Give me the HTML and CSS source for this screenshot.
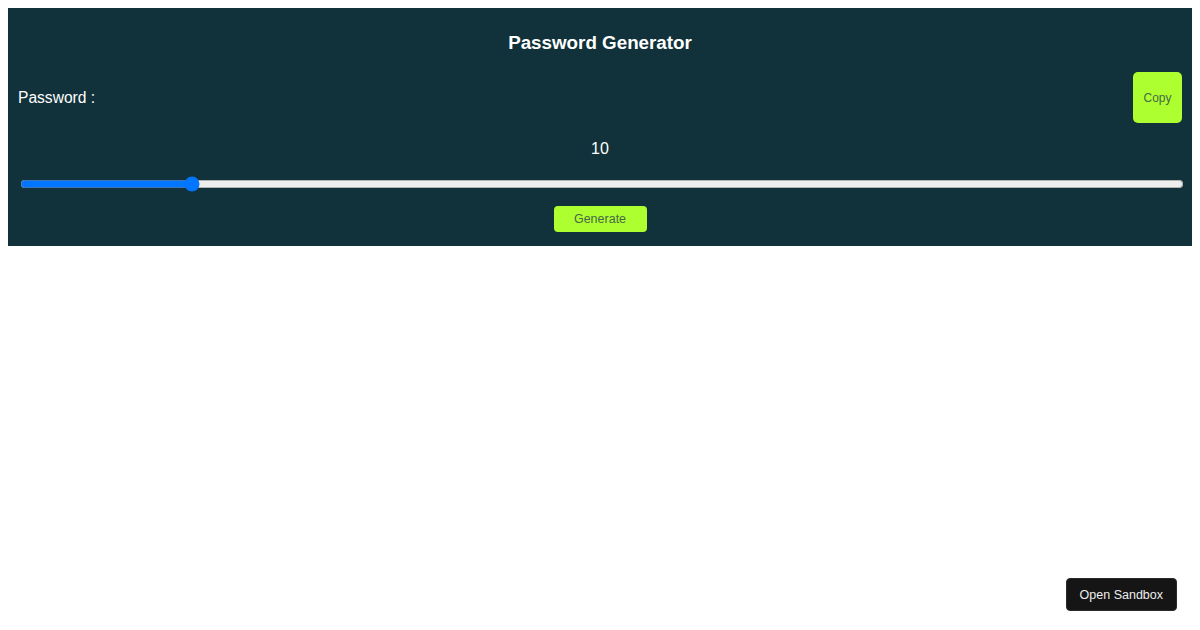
FILE: index.html
```html
<!DOCTYPE html>
<html lang="en">
<head>
  <meta charset="UTF-8">
  <meta name="viewport" content="width=device-width, initial-scale=1.0">
  <title>Password Generator</title>
  <link rel="stylesheet" href="styles.css">
</head>
<body>
  <div class="container">
    <h2 class="title">Password Generator</h2>

    <div class="password-row">
      <span class="password-label">Password : <span id="password"></span></span>
      <button class="copy-btn" onclick="copyPassword()">Copy</button>
    </div>

    <div class="length-value" id="lengthValue">10</div>
    <input type="range" id="length" class="length-range" min="0" max="70" value="10" oninput="updateLength()">

    <div class="generate-wrap">
      <button class="generate-btn" onclick="generatePassword()">Generate</button>
    </div>
  </div>

  <a class="sandbox-btn" href="#">Open Sandbox</a>

  <script>
    // Update the length label when slider moves
    function updateLength() {
      document.getElementById("lengthValue").textContent = document.getElementById("length").value;
    }

    // Build a random password
    function generatePassword() {
      const chars = "ABCDEFGHIJKLMNOPQRSTUVWXYZabcdefghijklmnopqrstuvwxyz0123456789!@#$%^&*";
      const length = document.getElementById("length").value;
      let result = "";
      for (let i = 0; i < length; i++) {
        result += chars.charAt(Math.floor(Math.random() * chars.length));
      }
      document.getElementById("password").textContent = result;
    }

    // Copy to clipboard
    function copyPassword() {
      const text = document.getElementById("password").textContent;
      if (navigator.clipboard) navigator.clipboard.writeText(text);
    }
  </script>
</body>
</html>
```

FILE: styles.css
```css
body {
  font-family: "Liberation Sans", Arial, sans-serif;
  margin: 8px;
  background: #fff;
}
.container {
  background-color: #11323a;
  color: #fff;
  padding: 10px 10px 14px;
}
.title {
  text-align: center;
  font-size: 18.8px;
  line-height: 21px;
  margin: 14px 0 19px;
}
.password-row {
  display: flex;
  align-items: center;
  justify-content: space-between;
  height: 51px;
}
.password-label {
  font-size: 15.6px;
}
.copy-btn {
  width: 49px;
  height: 51px;
  background-color: #adff2f;
  color: #46684a;
  border: none;
  border-radius: 5px;
  font-family: inherit;
  font-size: 12px;
  padding: 0;
  cursor: pointer;
}
.length-value {
  text-align: center;
  font-size: 16px;
  line-height: 18px;
  margin-top: 17px;
}
.length-range {
  display: block;
  width: 100%;
  margin: 18px 2px 2px;
}
.generate-wrap {
  text-align: center;
  margin-top: 14px;
}
.generate-btn {
  width: 93px;
  height: 26px;
  background-color: #adff2f;
  color: #46684a;
  border: none;
  border-radius: 4px;
  font-family: inherit;
  font-size: 12.5px;
  cursor: pointer;
}
.sandbox-btn {
  position: fixed;
  right: 23px;
  bottom: 19px;
  background-color: #151515;
  color: #eee;
  font-size: 12.5px;
  text-decoration: none;
  padding: 0 13px;
  height: 33px;
  line-height: 33px;
  border-radius: 4px;
  border: 1px solid #2a2a2a;
  box-sizing: border-box;
}
```
